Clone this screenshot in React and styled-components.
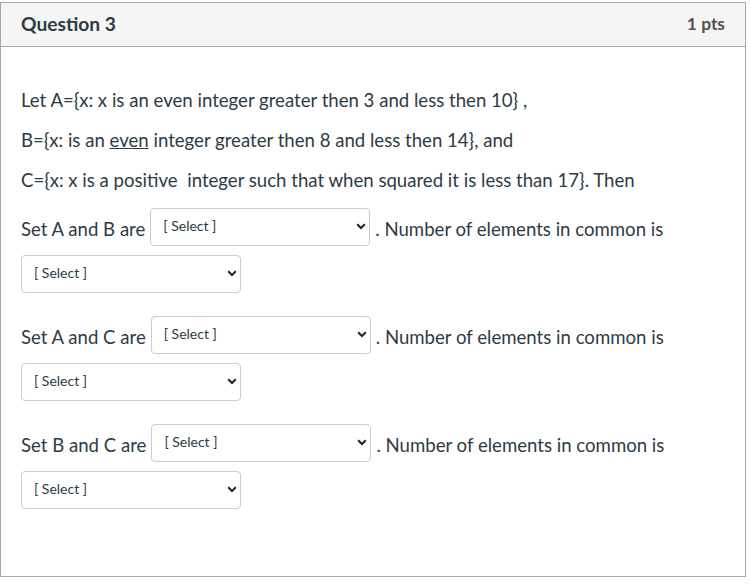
import React from "react";
import styled, { createGlobalStyle } from "styled-components";

const GlobalStyle = createGlobalStyle`
  body {
    margin: 0;
    background: #fff;
    font-family: Lato, "Noto Sans", sans-serif;
    color: #2d3b45;
  }
`;

const groups = [
  { id: "ab", label: "Set A and B are" },
  { id: "ac", label: "Set A and C are" },
  { id: "bc", label: "Set B and C are" },
];

const Chevron = () => (
  <svg width="10" height="7" viewBox="0 0 10 7">
    <path d="M1.2 1.3 L5 5 L8.8 1.3" fill="none" stroke="#222" strokeWidth="2" />
  </svg>
);

const Dropdown = () => (
  <SelectWrap>
    <Select defaultValue="">
      <option value="">[ Select ]</option>
    </Select>
    <Arrow>
      <Chevron />
    </Arrow>
  </SelectWrap>
);

const App = () => {
  return (
    <>
      <GlobalStyle />
      <Page>
        <Card>
          <Header>
            <Title>Question 3</Title>
            <Points>1 pts</Points>
          </Header>
          <Body>
            <Line>Let A={"{"}x: x is an even integer greater then 3 and less then 10{"}"} ,</Line>
            <Line>
              B={"{"}x: is an <u>even</u> integer greater then 8 and less then 14{"}"}, and
            </Line>
            <Line>C={"{"}x: x is a positive&nbsp; integer such that when squared it is less than 17{"}"}. Then</Line>
            <Groups>
              {groups.map(g => (
                <Group key={g.id}>
                  <Row>
                    <Label>{g.label}</Label>
                    <Dropdown />
                    <Label>. Number of elements in common is</Label>
                  </Row>
                  <Dropdown />
                </Group>
              ))}
            </Groups>
          </Body>
        </Card>
      </Page>
    </>
  );
};

const Page = styled.div`
  padding-top: 2px;
  width: 746px;
`;

const Card = styled.div`
  border: 1px solid #a8a8a8;
  height: 575px;
  box-sizing: border-box;
`;

const Header = styled.div`
  display: flex;
  justify-content: space-between;
  align-items: center;
  height: 43px;
  padding: 0 20px;
  background: #f5f5f5;
  border-bottom: 1px solid #a8a8a8;
`;

const Title = styled.div`
  font-size: 19.2px;
  font-weight: 700;
  color: #2d3b45;
  margin-top: -3px;
`;

const Points = styled.div`
  font-size: 17.4px;
  font-weight: 700;
  color: #505050;
  margin-top: -2px;
`;

const Body = styled.div`
  padding: 33px 20px 0;
  font-size: 18.6px;
  color: #2d3b45;
`;

const Line = styled.div`
  height: 40px;
  line-height: 40px;
  white-space: nowrap;
`;

const Groups = styled.div`
  display: flex;
  flex-direction: column;
  gap: 23px;
  margin-top: 8px;
`;

const Group = styled.div`
  display: flex;
  flex-direction: column;
  align-items: flex-start;
  gap: 9px;
`;

const Row = styled.div`
  display: flex;
  align-items: center;
  gap: 5px;
  white-space: nowrap;
`;

const Label = styled.span`
  padding-top: 4px;
`;

const SelectWrap = styled.div`
  position: relative;
  width: 220px;
  height: 38px;
`;

const Select = styled.select`
  appearance: none;
  width: 100%;
  height: 100%;
  box-sizing: border-box;
  border: 1px solid #c7cdd1;
  border-radius: 4px;
  background: #fff;
  padding: 0 30px 4px 12px;
  font-family: Lato, "Noto Sans", sans-serif;
  font-size: 14px;
  color: #2d3b45;
  outline: none;
`;

const Arrow = styled.span`
  position: absolute;
  right: 4px;
  top: 15px;
  pointer-events: none;
  display: flex;
`;

export default App;
